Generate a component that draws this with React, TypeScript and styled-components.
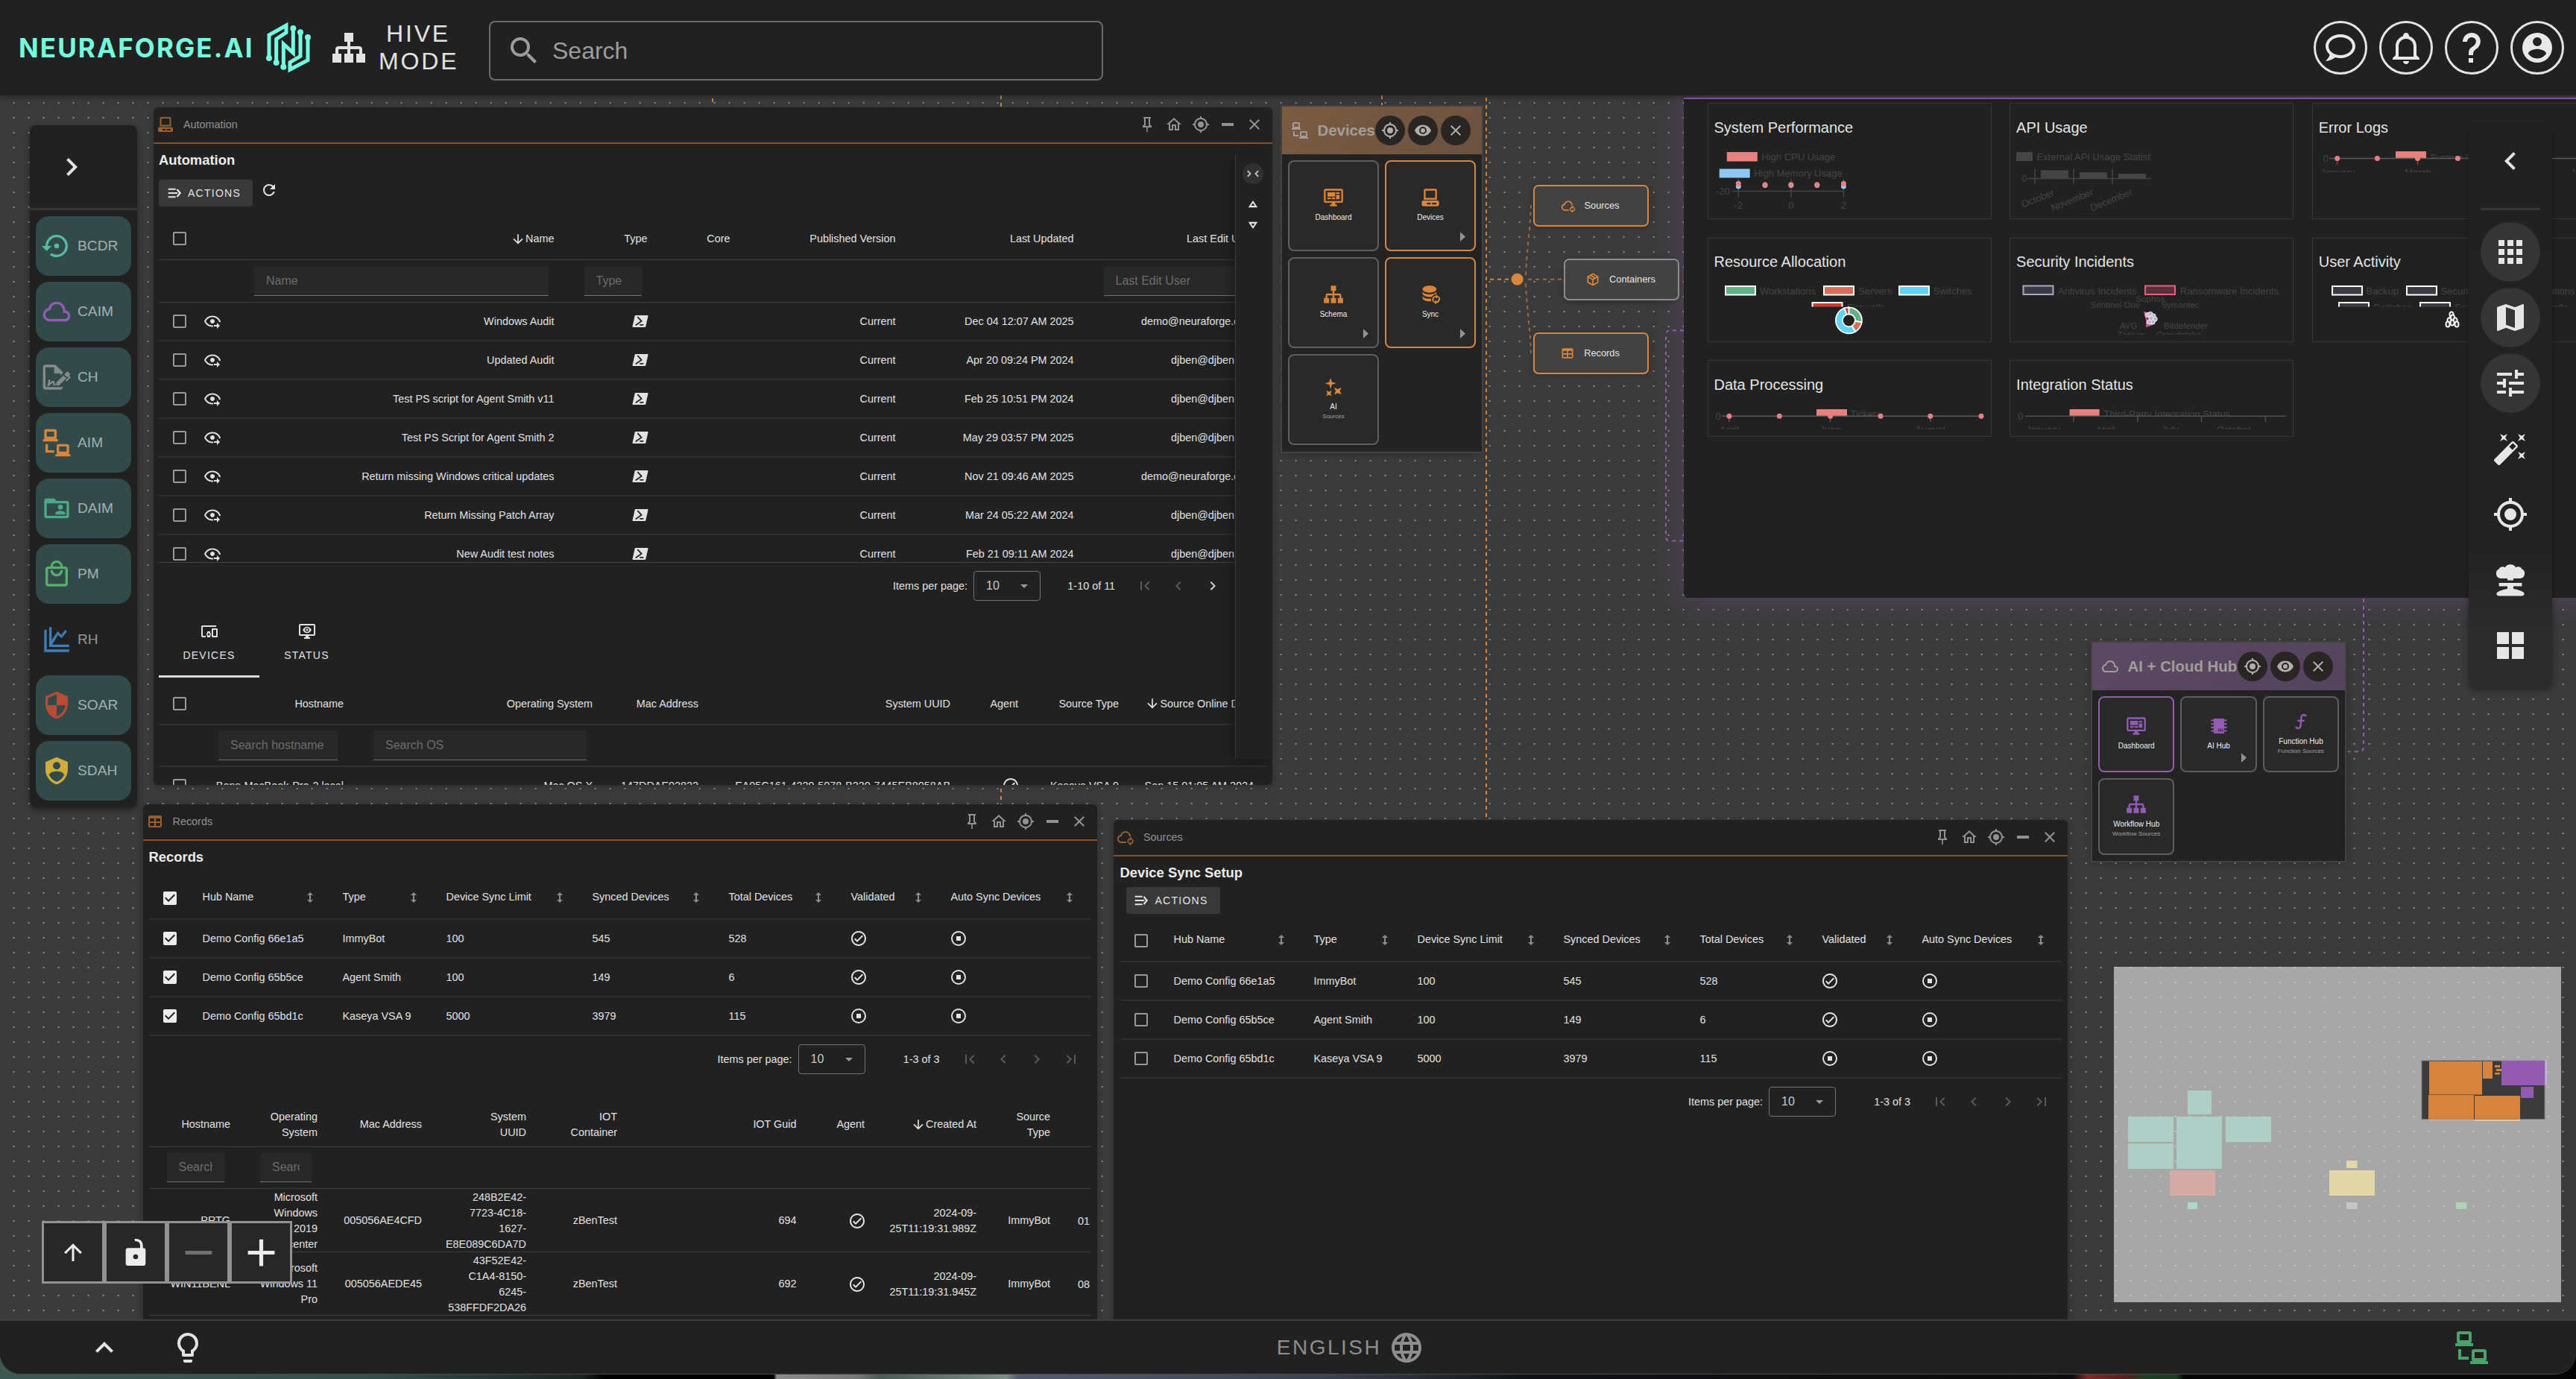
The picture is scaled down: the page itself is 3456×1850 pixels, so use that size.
import React from "react";
import styled, { createGlobalStyle, css } from "styled-components";

const ORANGE = "#d9853b";
const PURPLE = "#935bb5";
const TEXT = "#e2e2e2";

const Global = createGlobalStyle`
  * { box-sizing: border-box; }
  html, body { margin: 0; padding: 0; background: #000; }
  body { width: 3456px; height: 1850px; overflow: hidden; font-family: "Liberation Sans", Arial, Helvetica, sans-serif; color: ${TEXT}; }
`;

/* ------------------------------------------------------------------ icons */

const P: Record<string, string> = {
  sitemap: "M9,2V8H11V11H5C3.89,11 3,11.89 3,13V16H1V22H7V16H5V13H11V16H9V22H15V16H13V13H19V16H17V22H23V16H21V13C21,11.89 20.11,11 19,11H13V8H15V2H9Z",
  magnify: "M9.5,3A6.5,6.5 0 0,1 16,9.5C16,11.11 15.41,12.59 14.44,13.73L14.71,14H15.5L20.5,19L19,20.5L14,15.5V14.71L13.73,14.44C12.59,15.41 11.11,16 9.5,16A6.5,6.5 0 0,1 3,9.5A6.5,6.5 0 0,1 9.5,3M9.5,5C7,5 5,7 5,9.5C5,12 7,14 9.5,14C12,14 14,12 14,9.5C14,7 12,5 9.5,5Z",
  right: "M8.59,16.58L13.17,12L8.59,7.41L10,6L16,12L10,18L8.59,16.58Z",
  left: "M15.41,16.58L10.83,12L15.41,7.41L14,6L8,12L14,18L15.41,16.58Z",
  up: "M7.41,15.41L12,10.83L16.59,15.41L18,14L12,8L6,14L7.41,15.41Z",
  restore: "M12,3A9,9 0 0,0 3,12H0L4,16L8,12H5A7,7 0 0,1 12,5A7,7 0 0,1 19,12A7,7 0 0,1 12,19C10.5,19 9.09,18.5 7.94,17.7L6.5,19.14C8.04,20.3 9.94,21 12,21A9,9 0 0,0 21,12A9,9 0 0,0 12,3M14,12A2,2 0 0,0 12,10A2,2 0 0,0 10,12A2,2 0 0,0 12,14A2,2 0 0,0 14,12Z",
  cloud: "M6.5 20Q4.22 20 2.61 18.43 1 16.85 1 14.58 1 12.63 2.17 11.1 3.35 9.57 5.25 9.15 5.88 6.85 7.75 5.43 9.63 4 12 4 14.93 4 16.96 6.04 19 8.07 19 11 20.73 11.2 21.86 12.5 23 13.78 23 15.5 23 17.38 21.69 18.69 20.38 20 18.5 20M6.5 18H18.5Q19.55 18 20.27 17.27 21 16.55 21 15.5 21 14.45 20.27 13.73 19.55 13 18.5 13H17V11Q17 8.93 15.54 7.46 14.08 6 12 6 9.93 6 8.46 7.46 7 8.93 7 11H6.5Q5.05 11 4.03 12.03 3 13.05 3 14.5 3 15.95 4.03 17 5.05 18 6.5 18Z",
  fileSign: "M19.7 12.9L14 18.6H11.7V16.3L17.4 10.6L19.7 12.9M23.1 12.1C23.1 12.4 22.8 12.7 22.5 13L20 15.5L19.1 14.6L21.7 12L21.1 11.4L20.4 12.1L18.1 9.8L20.3 7.7C20.5 7.5 20.9 7.5 21.2 7.7L22.6 9.1C22.8 9.3 22.8 9.7 22.6 10C22.4 10.2 22.2 10.4 22.2 10.6C22.2 10.8 22.4 11 22.6 11.2C22.9 11.5 23.2 11.8 23.1 12.1M3 20V4H10V9H15V10.5L17 8.5V8L11 2H3C1.9 2 1 2.9 1 4V20C1 21.1 1.9 22 3 22H15C16.1 22 17 21.1 17 20H3M11 17.1C10.8 17.1 10.6 17.2 10.5 17.2L10 15H8.5L6.4 16.7L7 14H5.5L4.5 19H6L8.9 16.4L9.5 18.7H10.5L11 18.6V17.1Z",
  laptops: "M3.5 1H10.5A1.5 1.5 0 0 1 12 2.5V7.5A1.5 1.5 0 0 1 11.3 9H13V11H1V9H2.7A1.5 1.5 0 0 1 2 7.5V2.5A1.5 1.5 0 0 1 3.5 1M4 3V7H10V3ZM3 13H5V18H10V20H3ZM13.5 13H20.5A1.5 1.5 0 0 1 22 14.5V19.5A1.5 1.5 0 0 1 21.3 21H23V23H11V21H12.7A1.5 1.5 0 0 1 12 19.5V14.5A1.5 1.5 0 0 1 13.5 13M14 15V19H20V15Z",
  folder: "M20,6H12L10,4H4A2,2 0 0,0 2,6V18A2,2 0 0,0 4,20H20A2,2 0 0,0 22,18V8A2,2 0 0,0 20,6M20,18H4V8H20V18M15,9A2,2 0 0,1 17,11A2,2 0 0,1 15,13A2,2 0 0,1 13,11A2,2 0 0,1 15,9M19,17H11V16C11,14.67 13.67,14 15,14C16.33,14 19,14.67 19,16V17Z",
  shopping: "M19 6H17C17 3.2 14.8 1 12 1S7 3.2 7 6H5C3.9 6 3 6.9 3 8V20C3 21.1 3.9 22 5 22H19C20.1 22 21 21.1 21 20V8C21 6.9 20.1 6 19 6M12 3C13.7 3 15 4.3 15 6H9C9 4.3 10.3 3 12 3M19 20H5V8H19V20M12 12C10.3 12 9 10.7 9 9H7C7 11.8 9.2 14 12 14S17 11.8 17 9H15C15 10.7 13.7 12 12 12Z",
  chart: "M2 4H4V20H22V22H2ZM6 2H8V12.5L12.8 5.4L15.8 8.3L18.9 4.2L20.4 5.4L16 11L13.1 8.2L8.4 16H22V18H6Z",
  security: "M12,12H19C18.47,16.11 15.72,19.78 12,20.92V12H5V6.3L12,3.19M12,1L3,5V11C3,16.55 6.84,21.73 12,23C17.16,21.73 21,16.55 21,11V5L12,1Z",
  shieldAccount: "M12,1L3,5V11C3,16.55 6.84,21.74 12,23C17.16,21.74 21,16.55 21,11V5L12,1M12,5A3,3 0 0,1 15,8A3,3 0 0,1 12,11A3,3 0 0,1 9,8A3,3 0 0,1 12,5M17.13,17C15.92,18.85 14.11,20.24 12,20.92C9.89,20.24 8.08,18.85 6.87,17C6.53,16.5 6.24,16 6,15.47C6,13.82 8.71,12.47 12,12.47C15.29,12.47 18,13.79 18,15.47C17.76,16 17.47,16.5 17.13,17Z",
  pin: "M16,12V4H17V2H7V4H8V12L6,14V16H11.2V22H12.8V16H18V14L16,12M8.8,14L10,12.8V4H14V12.8L15.2,14H8.8Z",
  home: "M12 5.69L17 10.19V18H15V12H9V18H7V10.19L12 5.69M12 3L2 12H5V20H11V14H13V20H19V12H22",
  gps: "M12,8A4,4 0 0,1 16,12A4,4 0 0,1 12,16A4,4 0 0,1 8,12A4,4 0 0,1 12,8M3.05,13H1V11H3.05C3.5,6.83 6.83,3.5 11,3.05V1H13V3.05C17.17,3.5 20.5,6.83 20.95,11H23V13H20.95C20.5,17.17 17.17,20.5 13,20.95V23H11V20.95C6.83,20.5 3.5,17.17 3.05,13M12,5A7,7 0 0,0 5,12A7,7 0 0,0 12,19A7,7 0 0,0 19,12A7,7 0 0,0 12,5Z",
  minus: "M20 14H4V10H20",
  close: "M19,6.41L17.59,5L12,10.59L6.41,5L5,6.41L10.59,12L5,17.59L6.41,19L12,13.41L17.59,19L19,17.59L13.41,12L19,6.41Z",
  desktop: "M6 2H18A1.5 1.5 0 0 1 19.5 3.5V14.5H4.5V3.5A1.5 1.5 0 0 1 6 2M6.5 4V12.5H17.5V4ZM4 15.5H20A2 2 0 0 1 22 17.5V20A2 2 0 0 1 20 22H4A2 2 0 0 1 2 20V17.5A2 2 0 0 1 4 15.5M8 18V20H12.3V18ZM14 18V20H19V18Z",
  actions: "M2 4.5H14V7H2ZM2 10.7H17V13.3H2ZM2 17H14V19.5H2ZM15.2 6.8L17.2 5L23 12L17.2 19L15.2 17.2L19.4 12Z",
  refresh: "M17.65,6.35C16.2,4.9 14.21,4 12,4A8,8 0 0,0 4,12A8,8 0 0,0 12,20C15.73,20 18.84,17.45 19.73,14H17.65C16.83,16.33 14.61,18 12,18A6,6 0 0,1 6,12A6,6 0 0,1 12,6C13.66,6 15.14,6.69 16.22,7.78L13,11H20V4L17.65,6.35Z",
  arrowDown: "M11,4H13V16L18.5,10.5L19.92,11.92L12,19.84L4.08,11.92L5.5,10.5L11,16V4Z",
  arrowUp: "M13,20H11V8L5.5,13.5L4.08,12.08L12,4.16L19.92,12.08L18.5,13.5L13,8V20Z",
  box: "M19,3H5C3.89,3 3,3.89 3,5V19A2,2 0 0,0 5,21H19A2,2 0 0,0 21,19V5C21,3.89 20.1,3 19,3M19,5V19H5V5H19Z",
  boxOn: "M10,17L5,12L6.41,10.58L10,14.17L17.59,6.58L19,8M19,3H5C3.89,3 3,3.89 3,5V19A2,2 0 0,0 5,21H19A2,2 0 0,0 21,19V5C21,3.89 20.1,3 19,3Z",
  eyeArrow: "M12 4.5C7 4.5 2.73 7.61 1 12C2.73 16.39 7 19.5 12 19.5C12.36 19.5 12.72 19.5 13.08 19.45C13.03 19.13 13 18.82 13 18.5C13 18.14 13.04 17.78 13.1 17.42C12.74 17.46 12.37 17.5 12 17.5C8.24 17.5 4.83 15.36 3.18 12C4.83 8.64 8.24 6.5 12 6.5C15.76 6.5 19.17 8.64 20.82 12C20.7 12.24 20.56 12.45 20.43 12.68C21.09 12.84 21.72 13.11 22.29 13.5C22.56 13 22.8 12.5 23 12C21.27 7.61 17 4.5 12 4.5M12 9C10.34 9 9 10.34 9 12S10.34 15 12 15 15 13.66 15 12 13.66 9 12 9M18 14V17H14V19H18V22L22 18L18 14Z",
  powershell: "M21.83,4C22.32,4 22.63,4.4 22.5,4.89L19.34,19.11C19.23,19.6 18.75,20 18.26,20H2.17C1.68,20 1.37,19.6 1.5,19.11L4.66,4.89C4.77,4.4 5.25,4 5.74,4H21.83M15.83,16H11.83C11.37,16 11,16.38 11,16.84C11,17.31 11.37,17.69 11.83,17.69H15.83C16.3,17.69 16.68,17.31 16.68,16.84C16.68,16.38 16.3,16 15.83,16M5.78,16.28C5.38,16.56 5.29,17.11 5.57,17.5C5.85,17.92 6.41,18 6.81,17.73C14.16,12.56 14.21,12.5 14.26,12.47C14.44,12.31 14.53,12.09 14.54,11.87C14.55,11.67 14.5,11.5 14.38,11.31L9.46,6.03C9.13,5.67 8.57,5.65 8.21,6C7.85,6.32 7.83,6.88 8.16,7.24L12.31,11.68L5.78,16.28Z",
  devices: "M3 6h18V4H3c-1.1 0-2 .9-2 2v12c0 1.1.9 2 2 2h4v-2H3V6zm10 6H9v1.78c-.61.55-1 1.33-1 2.22s.39 1.67 1 2.22V20h4v-1.78c.61-.55 1-1.34 1-2.22s-.39-1.67-1-2.22V12zm-2 5.5c-.83 0-1.5-.67-1.5-1.5s.67-1.5 1.5-1.5 1.5.67 1.5 1.5-.67 1.5-1.5 1.5zM22 8h-6c-.5 0-1 .5-1 1v10c0 .5.5 1 1 1h6c.5 0 1-.5 1-1V9c0-.5-.5-1-1-1zm-1 10h-4v-8h4v8z",
  monitorEye: "M21,16V4H3V16H21M21,2A2,2 0 0,1 23,4V16A2,2 0 0,1 21,18H14V20H16V22H8V20H10V18H3C1.89,18 1,17.1 1,16V4C1,2.89 1.89,2 3,2H21M12 5.7C15 5.7 17 8 17.8 10C17 12 15 14.3 12 14.3C9 14.3 7 12 6.2 10C7 8 9 5.7 12 5.7M12 7.2A2.8 2.8 0 1 0 12 12.8A2.8 2.8 0 1 0 12 7.2M12 8.6A1.4 1.4 0 1 1 12 11.4A1.4 1.4 0 1 1 12 8.6",
  dashboard: "M21,16V4H3V16H21M21,2A2,2 0 0,1 23,4V16A2,2 0 0,1 21,18H14V20H16V22H8V20H10V18H3C1.89,18 1,17.1 1,16V4C1,2.89 1.89,2 3,2H21M5,6H14V11H5V6M15,6H19V8H15V6M19,9V14H15V9H19M5,12H9V14H5V12M10,12H14V14H10V12Z",
  sort: "M13,9V15H16L12,19L8,15H11V9H8L12,5L16,9H13Z",
  caret: "M7,10L12,15L17,10H7Z",
  first: "M18.41,16.59L13.82,12L18.41,7.41L17,6L11,12L17,18L18.41,16.59M6,6H8V18H6V6Z",
  last: "M5.59,7.41L10.18,12L5.59,16.59L7,18L13,12L7,6L5.59,7.41M16,6H18V18H16V6Z",
  check: "M12 2C6.5 2 2 6.5 2 12S6.5 22 12 22 22 17.5 22 12 17.5 2 12 2M12 20C7.59 20 4 16.41 4 12S7.59 4 12 4 20 7.59 20 12 16.41 20 12 20M16.59 7.58L10 14.17L7.41 11.59L6 13L10 17L18 9L16.59 7.58Z",
  stop: "M12,2A10,10 0 0,0 2,12A10,10 0 0,0 12,22A10,10 0 0,0 22,12A10,10 0 0,0 12,2M12,4C16.41,4 20,7.59 20,12C20,16.41 16.41,20 12,20C7.59,20 4,16.41 4,12C4,7.59 7.59,4 12,4M9,9V15H15V9",
  eye: "M12,9A3,3 0 0,0 9,12A3,3 0 0,0 12,15A3,3 0 0,0 15,12A3,3 0 0,0 12,9M12,17A5,5 0 0,1 7,12A5,5 0 0,1 12,7A5,5 0 0,1 17,12A5,5 0 0,1 12,17M12,4.5C7,4.5 2.73,7.61 1,12C2.73,16.39 7,19.5 12,19.5C17,19.5 21.27,16.39 23,12C21.27,7.61 17,4.5 12,4.5Z",
  table: "M5,4H19A2,2 0 0,1 21,6V18A2,2 0 0,1 19,20H5A2,2 0 0,1 3,18V6A2,2 0 0,1 5,4M5,8V12H11V8H5M13,8V12H19V8H13M5,14V18H11V14H5M13,14V18H19V14H13Z",
  cloudSync: "M6.5 20A5.5 5.5 0 0 1 1 14.5A5.5 5.5 0 0 1 5.3 9.1A7 7 0 0 1 19 11V11.6H17V11A5 5 0 0 0 7 11H6.5A3.5 3.5 0 0 0 3 14.5A3.5 3.5 0 0 0 6.5 18H13V20ZM18.5 13.2V15A3 3 0 0 0 16.5 19.5L15.4 20.6A4.5 4.5 0 0 1 18.5 13.2V11.6L21.2 14.2L18.5 16.8ZM20.6 15.5L21.7 14.4A4.5 4.5 0 0 1 18.7 21.8V23.4L16 20.8L18.7 18.2V20A3 3 0 0 0 20.6 15.5Z",
  package: "M21,16.5C21,16.88 20.79,17.21 20.47,17.38L12.57,21.82C12.41,21.94 12.21,22 12,22C11.79,22 11.59,21.94 11.43,21.82L3.53,17.38C3.21,17.21 3,16.88 3,16.5V7.5C3,7.12 3.21,6.79 3.53,6.62L11.43,2.18C11.59,2.06 11.79,2 12,2C12.21,2 12.41,2.06 12.57,2.18L20.47,6.62C20.79,6.79 21,7.12 21,7.5V16.5M12,4.15L10.11,5.22L16,8.61L17.96,7.5L12,4.15M6.04,7.5L12,10.85L13.96,9.75L8.08,6.35L6.04,7.5M5,15.91L11,19.29V12.58L5,9.21V15.91M19,15.91V9.21L13,12.58V19.29L19,15.91Z",
  dbSync: "M11 2C6.6 2 3 3.8 3 6C3 8.2 6.6 10 11 10C15.4 10 19 8.2 19 6C19 3.8 15.4 2 11 2ZM3 8.2V11C3 13.2 6.6 15 11 15C12 15 12.9 14.9 13.8 14.7C14.8 13 16.5 11.8 18.5 11.5L19 11V8.2C19 10.4 15.4 12 11 12C6.6 12 3 10.4 3 8.2ZM3 13.2V16C3 18.2 6.6 20 11 20C11.7 20 12.4 20 13 19.9C12.8 19 12.7 18 12.9 17L11 17C6.6 17 3 15.4 3 13.2ZM18.5 13.4V15A3 3 0 0 0 16.3 19.8L15.2 20.9A4.5 4.5 0 0 1 18.5 13.4V11.7L21.4 14.3L18.5 16.9ZM20.8 15.3L21.9 14.2A4.5 4.5 0 0 1 18.7 21.8V23.5L15.8 20.9L18.7 18.3V20.1A3 3 0 0 0 20.8 15.3Z",
  sparkle: "M8.7 1.4L10.2 6.5L15.4 8L10.2 9.5L8.7 14.6L7.2 9.5L2 8L7.2 6.5ZM12.8 12.8L17 14.6L21.2 12.8L19.4 16.8L21.2 20.8L17 19L12.8 20.8L14.6 16.8ZM3.6 16.2L6.8 17.5L10.1 16.2L8.7 19.4L10.1 22.6L6.8 21.2L3.6 22.6L5 19.4Z",
  chip: "M6 3.5H18V4.7H21V6.5H18V8.7H21V10.5H18V12.7H21V14.5H18V16.7H21V18.5H18V20.5H6V18.5H3V16.7H6V14.5H3V12.7H6V10.5H3V8.7H6V6.5H3V4.7H6ZM11.3 15V18.5H12.4V15ZM13.5 15V18.5H14.6V15ZM15.7 15V18.5H16.7V15Z",
  fn: "M15.6,5.29C14.5,5.19 13.53,6 13.43,7.11L13.18,10H16V12H13L12.56,17.07C12.37,19.27 10.43,20.9 8.23,20.7C6.92,20.59 5.82,19.86 5.17,18.83L6.67,17.33C6.91,18.07 7.57,18.64 8.4,18.71C9.5,18.81 10.47,18 10.57,16.89L11,12H8V10H11.17L11.44,6.93C11.63,4.73 13.57,3.1 15.77,3.3C17.08,3.41 18.18,4.14 18.83,5.17L17.33,6.67C17.09,5.93 16.43,5.36 15.6,5.29Z",
  apps: "M16,20H20V16H16M16,14H20V10H16M10,8H14V4H10M16,8H20V4H16M10,14H14V10H10M4,14H8V10H4M4,20H8V16H4M10,20H14V16H10M4,8H8V4H4V8Z",
  map: "M15,19L9,16.89V5L15,7.11M20.5,3C20.44,3 20.39,3 20.34,3L15,5.1L9,3L3.36,4.9C3.15,4.97 3,5.15 3,5.38V20.5A0.5,0.5 0 0,0 3.5,21C3.55,21 3.61,21 3.66,20.97L9,18.9L15,21L20.64,19.1C20.85,19 21,18.85 21,18.62V3.5A0.5,0.5 0 0,0 20.5,3Z",
  tune: "M3,17V19H9V17H3M3,5V7H13V5H3M13,21V19H21V17H13V15H11V21H13M7,9V11H3V13H7V15H9V9H7M21,13V11H11V13H21M15,9H17V7H21V5H17V3H15V9Z",
  wand: "M7.5,5.6L5,7L6.4,4.5L5,2L7.5,3.4L10,2L8.6,4.5L10,7L7.5,5.6M19.5,15.4L22,14L20.6,16.5L22,19L19.5,17.6L17,19L18.4,16.5L17,14L19.5,15.4M22,2L20.6,4.5L22,7L19.5,5.6L17,7L18.4,4.5L17,2L19.5,3.4L22,2M13.34,12.78L15.78,10.34L13.66,8.22L11.22,10.66L13.34,12.78M14.37,7.29L16.71,9.63C17.1,10 17.1,10.65 16.71,11.04L5.04,22.71C4.65,23.1 4,23.1 3.63,22.71L1.29,20.37C0.9,20 0.9,19.35 1.29,18.96L12.96,7.29C13.35,6.9 14,6.9 14.37,7.29Z",
  nuke: "M14 12.2H10V11H5.5A3.3 3.3 0 0 1 4.2 4.8A3 3 0 0 1 8.4 3.6A4 3.4 0 0 1 15.6 3.6A3 3 0 0 1 19.8 4.8A3.3 3.3 0 0 1 18.5 11H14ZM4.3 14H19.7V16.2H14V18C17 18.5 19.6 19.2 21 20.5C21.8 21.8 20.8 22.8 19.5 22.8H4.5C3.2 22.8 2.2 21.8 3 20.5C4.4 19.2 7 18.5 10 18V16.2H4.3Z",
  grid4: "M3,11H11V3H3M3,21H11V13H3M13,21H21V13H13M13,3V11H21V3",
  chat: "M12,3C6.5,3 2,6.58 2,11C2.05,13.15 3.06,15.17 4.75,16.5C4.75,17.1 4.33,18.67 2,21C4.37,20.89 6.64,20 8.47,18.5C9.61,18.83 10.81,19 12,19C17.5,19 22,15.42 22,11C22,6.58 17.5,3 12,3M12,17C7.58,17 4,14.31 4,11C4,7.69 7.58,5 12,5C16.42,5 20,7.69 20,11C20,14.31 16.42,17 12,17Z",
  bell: "M10 21H14C14 22.1 13.1 23 12 23S10 22.1 10 21M21 19V20H3V19L5 17V11C5 7.9 7 5.2 10 4.3V4C10 2.9 10.9 2 12 2S14 2.9 14 4V4.3C17 5.2 19 7.9 19 11V17L21 19M17 11C17 8.2 14.8 6 12 6S7 8.2 7 11V18H17V11Z",
  help: "M10,19H13V22H10V19M12,2C17.35,2.22 19.68,7.62 16.5,11.67C15.67,12.67 14.33,13.33 13.67,14.17C13,15 13,16 13,17H10C10,15.33 10,13.92 10.67,12.92C11.33,11.92 12.67,11.33 13.5,10.67C15.92,8.43 15.32,5.26 12,5A3,3 0 0,0 9,8H6A6,6 0 0,1 12,2Z",
  account: "M12,19.2C9.5,19.2 7.29,17.92 6,16C6.03,14 10,12.9 12,12.9C14,12.9 17.97,14 18,16C16.71,17.92 14.5,19.2 12,19.2M12,5A3,3 0 0,1 15,8A3,3 0 0,1 12,11A3,3 0 0,1 9,8A3,3 0 0,1 12,5M12,2A10,10 0 0,0 2,12A10,10 0 0,0 12,22A10,10 0 0,0 22,12C22,6.47 17.5,2 12,2Z",
  bulb: "M12,2A7,7 0 0,1 19,9C19,11.38 17.81,13.47 16,14.74V17A1,1 0 0,1 15,18H9A1,1 0 0,1 8,17V14.74C6.19,13.47 5,11.38 5,9A7,7 0 0,1 12,2M9,21V20H15V21A1,1 0 0,1 14,22H10A1,1 0 0,1 9,21M12,4A5,5 0 0,0 7,9C7,11.05 8.23,12.81 10,13.58V16H14V13.58C15.77,12.81 17,11.05 17,9A5,5 0 0,0 12,4Z",
  web: "M16.36,14C16.44,13.34 16.5,12.68 16.5,12C16.5,11.32 16.44,10.66 16.36,10H19.74C19.9,10.64 20,11.31 20,12C20,12.69 19.9,13.36 19.74,14M14.59,19.56C15.19,18.45 15.65,17.25 15.97,16H18.92C17.96,17.65 16.43,18.93 14.59,19.56M14.34,14H9.66C9.56,13.34 9.5,12.68 9.5,12C9.5,11.32 9.56,10.65 9.66,10H14.34C14.43,10.65 14.5,11.32 14.5,12C14.5,12.68 14.43,13.34 14.34,14M12,19.96C11.17,18.76 10.5,17.43 10.09,16H13.91C13.5,17.43 12.83,18.76 12,19.96M8,8H5.08C6.03,6.34 7.57,5.06 9.4,4.44C8.8,5.55 8.35,6.75 8,8M5.08,16H8C8.35,17.25 8.8,18.45 9.4,19.56C7.57,18.93 6.03,17.65 5.08,16M4.26,14C4.1,13.36 4,12.69 4,12C4,11.31 4.1,10.64 4.26,10H7.64C7.56,10.66 7.5,11.32 7.5,12C7.5,12.68 7.56,13.34 7.64,14M12,4.03C12.83,5.23 13.5,6.57 13.91,8H10.09C10.5,6.57 11.17,5.23 12,4.03M18.92,8H15.97C15.65,6.75 15.19,5.55 14.59,4.44C16.43,5.07 17.96,6.34 18.92,8M12,2C6.47,2 2,6.5 2,12A10,10 0 0,0 12,22A10,10 0 0,0 22,12A10,10 0 0,0 12,2Z",
  lockOpen: "M6 8.6H15.6V6.6C15.6 4.2 14 2.9 11.6 3.2L11 1.4C14.8 .6 17.8 3 17.8 6.6V8.6H18A2 2 0 0 1 20 10.6V20.8A2 2 0 0 1 18 22.8H6A2 2 0 0 1 4 20.8V10.6A2 2 0 0 1 6 8.6M12 13.6A2 2 0 1 0 12 17.6A2 2 0 1 0 12 13.6Z",
  dash: "M1 10.5H23V13.5H1Z",
  plus: "M10.4 1H13.6V10.4H23V13.6H13.6V23H10.4V13.6H1V10.4H10.4Z",
  triUp: "M12 6L19.5 17H4.5ZM12 10.3L9.2 14.5H14.8Z",
  triDown: "M4.5 7H19.5L12 18ZM9.2 9.5L12 13.7L14.8 9.5Z",
  collapse: "M1.5 7.6L3.4 6L9 12L3.4 18L1.5 16.4L5.6 12ZM22.5 7.6L20.6 6L15 12L20.6 18L22.5 16.4L18.4 12Z",
  play: "M7 3L17 12L7 21Z",
};
const EVEN = new Set(["laptops", "desktop", "chip", "lockOpen", "triUp", "triDown", "monitorEye"]);

const Svg = styled.svg`
  display: block;
  flex: none;
`;
const Ico = ({ n, s = 24, c = "currentColor" }: { n: string; s?: number; c?: string }) => (
  <Svg width={s} height={s} viewBox="0 0 24 24">
    <path d={P[n]} fill={c} fillRule={EVEN.has(n) ? "evenodd" : "nonzero"} />
  </Svg>
);

/* ----------------------------------------------------------------- layout */

const Desktop = styled.div`
  width: 3456px;
  height: 1850px;
  overflow: hidden;
  background: linear-gradient(90deg, #3c5a52 0, #35504a 500px, #1c2422 780px, #000 812px, #000 1038px, #8b8b8b 1042px, #777 1150px, #4c5a56 1180px, #7d8c88 1350px, #555b6e 1365px, #3c3f4c 1800px, #101113 2050px, #0c0c0c 2780px, #7e2b28 2800px, #5a1f1d 2850px, #1d4024 2880px, #1d3a22 2920px, #050505 2930px);
`;
const Frame = styled.div`
  width: 3456px;
  height: 1844px;
  display: flex;
  flex-direction: column;
  overflow: hidden;
  border-radius: 0 0 28px 28px;
  border-bottom: 1px solid #4a4a4a;
  background: #212121;
`;
const Header = styled.header`
  position: relative;
  z-index: 5;
  flex: none;
  height: 128px;
  background: #212121;
  display: flex;
  align-items: center;
  padding: 0 16px 0 25px;
  box-shadow: 0 2px 8px rgba(0, 0, 0, 0.35);
`;
const Brand = styled.div`
  width: 330px;
  font-family: Inter, sans-serif;
  font-weight: 700;
  font-size: 35px;
  letter-spacing: 2.1px;
  color: #75fbde;
  white-space: nowrap;
`;
const LogoSvg = styled(Svg)`
  margin-left: 1px;
`;
const Mode = styled.div`
  margin-left: 16px;
  width: 106px;
  font-size: 32px;
  line-height: 37px;
  letter-spacing: 2.86px;
  text-align: center;
`;
const HiveIcon = styled.div`
  margin-left: 26px;
`;
const SearchBox = styled.div`
  margin: 8px 0 0 42px;
  width: 824px;
  height: 80px;
  border: 2px solid #6b6b6b;
  border-radius: 8px;
  display: flex;
  align-items: center;
  gap: 14px;
  padding-left: 21px;
  font-size: 32px;
  color: #9c9c9c;
`;
const HeaderActions = styled.div`
  margin-left: auto;
  display: flex;
  gap: 16px;
`;
const RoundAction = styled.div`
  width: 72px;
  height: 72px;
  border: 3px solid #e4e4e4;
  border-radius: 50%;
  display: grid;
  place-items: center;
  color: #e8e8e8;
`;

const Canvas = styled.main`
  position: relative;
  flex: 1;
  overflow: hidden;
  background-color: #3b3b3b;
  background-image: radial-gradient(circle, #8a8a8a 0, #8a8a8a 0.9px, transparent 1.5px);
  background-size: 20px 20px;
  background-position: 8.6px 0px;
`;
const EdgesSvg = styled.svg`
  position: absolute;
  left: 0;
  top: 0;
`;

/* Free-floating item, placed by its page coordinates under the 128px header. */
const Placed = styled.div<{ $x: number; $y: number; $w: number; $h: number }>`
  position: absolute;
  left: ${(p) => p.$x}px;
  top: ${(p) => p.$y - 128}px;
  width: ${(p) => p.$w}px;
  height: ${(p) => p.$h}px;
`;

const WindowBox = styled(Placed)`
  background: #212121;
  border-radius: 6px;
  overflow: hidden;
  display: flex;
  flex-direction: column;
  box-shadow: 0 2px 10px rgba(0, 0, 0, 0.25);
`;
const WindowBar = styled.div`
  flex: none;
  height: 49px;
  border-bottom: 2px solid #86522a;
  display: flex;
  align-items: center;
  padding: 0 12px 1px 4px;
  color: #929292;
  font-size: 14.4px;
`;
const BarIcon = styled.div`
  width: 36px;
  color: #97602f;
`;
const BarButtons = styled.div`
  margin-left: auto;
  display: flex;
  gap: 12px;
`;
const WindowBody = styled.div<{ $l?: number }>`
  flex: 1;
  min-height: 0;
  padding: 7.5px 8px 0 ${(p) => p.$l ?? 8}px;
  display: flex;
  flex-direction: column;
`;
const Title = styled.div`
  flex: none;
  height: 29px;
  line-height: 27px;
  font-size: 18.4px;
  font-weight: 700;
  color: #ececec;
`;
const ActionRow = styled.div<{ $mt: number; $ml?: number }>`
  flex: none;
  margin: ${(p) => p.$mt}px 0 0 ${(p) => p.$ml ?? 0}px;
  height: 36px;
  display: flex;
  gap: 10px;
`;
const ActionButton = styled.div`
  width: 126px;
  height: 36px;
  border-radius: 4px;
  background: #393939;
  display: flex;
  align-items: center;
  gap: 8.5px;
  padding-left: 10.5px;
  font-size: 14px;
  letter-spacing: 1.25px;
`;
const RefreshSlot = styled.div`
  padding-top: 2px;
`;

/* ----------------------------------------------------------------- tables */

const TableBox = styled.div<{ $mt: number; $h?: number }>`
  flex: none;
  margin-top: ${(p) => p.$mt}px;
  ${(p) => p.$h && css`height: ${p.$h}px; border-bottom: 1px solid #424242;`}
  overflow: hidden;
  font-size: 14.4px;
`;
const Row = styled.div<{ $cols: string; $h: number; $line?: string }>`
  display: grid;
  grid-template-columns: ${(p) => p.$cols};
  height: ${(p) => p.$h}px;
  align-items: center;
  border-bottom: ${(p) => p.$line ?? "2px solid #2e2e2e"};
`;
const Cell = styled.div<{ $align?: string; $wrap?: boolean }>`
  display: flex;
  align-items: center;
  justify-content: ${(p) => (p.$align === "left" ? "flex-start" : p.$align === "center" ? "center" : "flex-end")};
  text-align: ${(p) => p.$align ?? "right"};
  padding: 1px ${(p) => (p.$align === "center" ? 0 : 16)}px 0;
  line-height: 21px;
  white-space: ${(p) => (p.$wrap ? "pre-line" : "nowrap")};
  color: ${TEXT};
  min-width: 0;
`;
const BoxCell = styled(Cell)`
  padding-top: 0;
  color: #9a9a9a;
`;
const EyeCell = styled.div`
  padding-left: 4px;
`;
const SortSlot = styled.div`
  margin-left: auto;
  color: #8c8c8c;
`;
const IconNudge = styled.div`
  margin: 0 -2px;
`;
const Field = styled.div`
  margin: 0 24px;
  height: 40px;
  min-width: 0;
  padding: 0 16px;
  background: #282828;
  border-bottom: 1.5px solid #717171;
  border-radius: 4px 4px 0 0;
`;
const FieldText = styled.div`
  overflow: hidden;
  white-space: nowrap;
  font-size: 16px;
  line-height: 40px;
  color: #6c6c6c;
`;
const SearchField = ({ t }: { t?: string }) => (t ? <Field><FieldText>{t}</FieldText></Field> : <span />);

const PagerRow = styled.div`
  flex: none;
  height: 63px;
  display: flex;
  align-items: center;
  justify-content: flex-end;
  padding-right: 15px;
  font-size: 14.4px;
`;
const PageSize = styled.div`
  margin-left: 8px;
  width: 90px;
  height: 40px;
  border: 1px solid #727272;
  border-radius: 4px;
  display: flex;
  align-items: center;
  justify-content: space-between;
  padding: 0 9px 0 16px;
  font-size: 16px;
  color: #c8c8c8;
`;
const PageRange = styled.div`
  width: 100px;
  text-align: right;
`;
const PageNav = styled.div`
  margin-left: 28px;
  display: flex;
  gap: 21.3px;
  color: #5a5a5a;
`;
const Pager = ({ range, next }: { range: string; next?: boolean }) => (
  <PagerRow>
    Items per page:
    <PageSize>10<Ico n="caret" c="#9a9a9a" /></PageSize>
    <PageRange>{range}</PageRange>
    <PageNav>
      <Ico n="first" />
      <Ico n="left" />
      <Ico n="right" c={next ? "#cfcfcf" : undefined} />
      <Ico n="last" />
    </PageNav>
  </PagerRow>
);

const Window = ({ x, y, w, h, icon, name, children }: any) => (
  <WindowBox $x={x} $y={y} $w={w} $h={h}>
    <WindowBar>
      <BarIcon><Ico n={icon} /></BarIcon>
      {name}
      <BarButtons>
        {["pin", "home", "gps", "minus", "close"].map((n) => <Ico key={n} n={n} />)}
      </BarButtons>
    </WindowBar>
    {children}
  </WindowBox>
);

const AUTO_COLS = "56px 48px 442.5px 125px 111px 222px 239px 242px";
const AUTO_ROWS = [
  ["Windows Audit", "Dec 04 12:07 AM 2025", "demo@neuraforge.com"],
  ["Updated Audit", "Apr 20 09:24 PM 2024", "djben@djben.net"],
  ["Test PS script for Agent Smith v11", "Feb 25 10:51 PM 2024", "djben@djben.net"],
  ["Test PS Script for Agent Smith 2", "May 29 03:57 PM 2025", "djben@djben.net"],
  ["Return missing Windows critical updates", "Nov 21 09:46 AM 2025", "demo@neuraforge.com"],
  ["Return Missing Patch Array", "Mar 24 05:22 AM 2024", "djben@djben.net"],
  ["New Audit test notes", "Feb 21 09:11 AM 2024", "djben@djben.net"],
];
const UserCell = styled(Cell)<{ $wide: boolean }>`
  padding-right: ${(p) => (p.$wide ? 16 : 18.5)}px;
`;
const DEV_COLS = "56px 208px 334px 142px 338px 91px 135px 181px";

const Tabs = styled.div`
  flex: none;
  height: 91px;
  display: flex;
`;
const Tab = styled.div<{ $w: number; $on?: boolean }>`
  width: ${(p) => p.$w}px;
  display: flex;
  flex-direction: column;
  align-items: center;
  padding-top: 17px;
  gap: 11px;
  font-size: 14px;
  line-height: 18px;
  letter-spacing: 1.25px;
  border-bottom: 3px solid ${(p) => (p.$on ? "#dcdcdc" : "transparent")};
`;
const Drawer = styled.div`
  position: absolute;
  right: 0;
  top: 63px;
  width: 50px;
  height: 811px;
  background: #212121;
  border-left: 1px solid #3c3c3c;
  box-shadow: -4px 4px 16px rgba(0, 0, 0, 0.3);
  display: flex;
  flex-direction: column;
  align-items: center;
  padding: 12px 3px 0 0;
`;
const DrawerRound = styled.div`
  width: 28px;
  height: 28px;
  border-radius: 50%;
  background: #313131;
  color: #c4c4c4;
  display: grid;
  place-items: center;
  margin-bottom: 13px;
`;
const DrawerStep = styled.div`
  height: 28px;
  display: grid;
  place-items: center;
`;

const AutomationWindow = () => (
  <Window x={206} y={144} w={1501} h={909} icon="desktop" name="Automation">
    <WindowBody $l={7}>
      <Title>Automation</Title>
      <ActionRow $mt={11}>
        <ActionButton><Ico n="actions" s={20} />ACTIONS</ActionButton>
        <RefreshSlot><Ico n="refresh" /></RefreshSlot>
      </ActionRow>
      <TableBox $mt={16} $h={462}>
        <Row $cols={AUTO_COLS} $h={56} $line="1px solid #3d3d3d">
          <BoxCell $align="center"><Ico n="box" /></BoxCell><span />
          <Cell><Ico n="arrowDown" s={20} />Name</Cell>
          <Cell>Type</Cell><Cell>Core</Cell><Cell>Published Version</Cell><Cell>Last Updated</Cell><Cell>Last Edit User</Cell>
        </Row>
        <Row $cols={AUTO_COLS} $h={57} $line="1px solid #3d3d3d">
          <span /><span />
          <SearchField t="Name" /><SearchField t="Type" /><span /><span /><span /><SearchField t="Last Edit User" />
        </Row>
        {AUTO_ROWS.map(([name, date, user]) => (
          <Row key={name} $cols={AUTO_COLS} $h={52}>
            <BoxCell $align="center"><Ico n="box" /></BoxCell>
            <EyeCell><Ico n="eyeArrow" /></EyeCell>
            <Cell>{name}</Cell>
            <Cell><IconNudge><Ico n="powershell" /></IconNudge></Cell>
            <Cell /><Cell>Current</Cell><Cell>{date}</Cell><UserCell $wide={user[1] === "e"}>{user}</UserCell>
          </Row>
        ))}
      </TableBox>
      <Pager range="1-10 of 11" next />
      <Tabs>
        <Tab $w={135} $on><Ico n="devices" />DEVICES</Tab>
        <Tab $w={127}><Ico n="monitorEye" />STATUS</Tab>
      </Tabs>
      <TableBox $mt={8}>
        <Row $cols={DEV_COLS} $h={56}>
          <BoxCell $align="center"><Ico n="box" /></BoxCell>
          <Cell>Hostname</Cell><Cell>Operating System</Cell><Cell>Mac Address</Cell><Cell>System UUID</Cell><Cell>Agent</Cell><Cell>Source Type</Cell>
          <Cell><Ico n="arrowDown" s={20} />Source Online Date</Cell>
        </Row>
        <Row $cols={DEV_COLS} $h={56}>
          <span /><SearchField t="Search hostname" /><SearchField t="Search OS" />
        </Row>
        <Row $cols={DEV_COLS} $h={52}>
          <BoxCell $align="center"><Ico n="box" /></BoxCell>
          <Cell>Bens-MacBook-Pro-2.local</Cell><Cell>Mac OS X</Cell><Cell>147DDAE02822</Cell>
          <Cell>EA05C161-4229-5078-B230-7445EB8058AB</Cell>
          <Cell><IconNudge><Ico n="check" /></IconNudge></Cell>
          <Cell>Kaseya VSA 9</Cell><Cell>Sep 15 01:05 AM 2024</Cell>
        </Row>
      </TableBox>
    </WindowBody>
    <Drawer>
      <DrawerRound><Ico n="collapse" s={18} /></DrawerRound>
      <DrawerStep><Ico n="triUp" s={20} /></DrawerStep>
      <DrawerStep><Ico n="triDown" s={20} /></DrawerStep>
    </Drawer>
  </Window>
);

const SYNC_COLS = "56px 188px 139px 196px 183px 164px 134px 203px";
const SYNC_HEAD = ["Hub Name", "Type", "Device Sync Limit", "Synced Devices", "Total Devices", "Validated", "Auto Sync Devices"];
const SYNC_ROWS = [
  ["Demo Config 66e1a5", "ImmyBot", "100", "545", "528", "check", "stop"],
  ["Demo Config 65b5ce", "Agent Smith", "100", "149", "6", "check", "stop"],
  ["Demo Config 65bd1c", "Kaseya VSA 9", "5000", "3979", "115", "stop", "stop"],
];
const HeadCell = styled(Cell)`
  padding-top: 0;
  padding-bottom: 2px;
`;
const SyncTable = ({ on, mt }: { on?: boolean; mt: number }) => (
  <>
    <TableBox $mt={mt}>
      <Row $cols={SYNC_COLS} $h={56}>
        <BoxCell $align="center"><Ico n={on ? "boxOn" : "box"} c={on ? "#ececec" : undefined} /></BoxCell>
        {SYNC_HEAD.map((t) => <HeadCell key={t} $align="left">{t}<SortSlot><Ico n="sort" /></SortSlot></HeadCell>)}
      </Row>
      {SYNC_ROWS.map((r) => (
        <Row key={r[0]} $cols={SYNC_COLS} $h={52}>
          <BoxCell $align="center"><Ico n={on ? "boxOn" : "box"} c={on ? "#ececec" : undefined} /></BoxCell>
          {r.map((t, i) => <Cell key={i} $align="left">{i > 4 ? <IconNudge><Ico n={t} /></IconNudge> : t}</Cell>)}
        </Row>
      ))}
    </TableBox>
    <Pager range="1-3 of 3" />
  </>
);

const REC_COLS = "125.5px 117px 140px 140px 122px 240.5px 91.5px 150px 99px 60px";
const REC_ROWS = [
  ["PRTG", "Microsoft\nWindows\nServer 2019\nDatacenter", "005056AE4CFD", "248B2E42-\n7723-4C18-\n1627-\nE8E089C6DA7D", "zBenTest", "694", "check", "2024-09-\n25T11:19:31.989Z", "ImmyBot", "01"],
  ["WIN11BENL", "Microsoft\nWindows 11\nPro", "005056AEDE45", "43F52E42-\nC1A4-8150-\n6245-\n538FFDF2DA26", "zBenTest", "692", "check", "2024-09-\n25T11:19:31.945Z", "ImmyBot", "08"],
];
const LastCell = styled.div`
  padding: 1px 0 0 21px;
`;
const RecordsWindow = () => (
  <Window x={191.5} y={1079} w={1280} h={720} icon="table" name="Records">
    <WindowBody>
      <Title>Records</Title>
      <SyncTable on mt={13} />
      <TableBox $mt={26}>
        <Row $cols={REC_COLS} $h={60} $line="1px solid #3d3d3d">
          {["Hostname", "Operating\nSystem", "Mac Address", "System\nUUID", "IOT\nContainer", "IOT Guid", "Agent"].map((t) => <Cell key={t} $wrap>{t}</Cell>)}
          <Cell><Ico n="arrowDown" s={20} />Created At</Cell>
          <Cell $wrap>{"Source\nType"}</Cell>
        </Row>
        <Row $cols={REC_COLS} $h={56} $line="1px solid #3d3d3d">
          <SearchField t="Search" /><SearchField t="Search" />
        </Row>
        {REC_ROWS.map((r) => (
          <Row key={r[0]} $cols={REC_COLS} $h={85} $line="1px solid #3d3d3d">
            {r.map((t, i) =>
              i === 9 ? <LastCell key={i}>{t}</LastCell> : (
                <Cell key={i} $wrap>{i === 6 ? <IconNudge><Ico n={t} /></IconNudge> : t}</Cell>
              ))}
          </Row>
        ))}
      </TableBox>
    </WindowBody>
  </Window>
);

const SourcesWindow = () => (
  <Window x={1494} y={1100} w={1280} h={700} icon="cloudSync" name="Sources">
    <WindowBody $l={8.5}>
      <Title>Device Sync Setup</Title>
      <ActionRow $mt={4} $ml={8}><ActionButton><Ico n="actions" s={20} />ACTIONS</ActionButton></ActionRow>
      <SyncTable mt={9} />
    </WindowBody>
  </Window>
);

/* -------------------------------------------------------------------- hubs */

const HubBox = styled(Placed)`
  background: #232323;
  outline: 2px solid #424242;
  box-shadow: 0 2px 12px rgba(0, 0, 0, 0.3);
  display: flex;
  flex-direction: column;
`;
const HubHead = styled.div<{ $bg: string }>`
  flex: none;
  height: 64px;
  background: ${(p) => p.$bg};
  display: flex;
  align-items: center;
  padding-left: 12px;
  color: #a29d99;
  font-size: 20.4px;
  font-weight: 700;
  white-space: nowrap;
`;
const HubName = styled.div<{ $w: number }>`
  margin-left: 11.5px;
  width: ${(p) => p.$w}px;
`;
const HubRound = styled.div`
  width: 40px;
  height: 40px;
  margin-right: 4px;
  border-radius: 50%;
  background: #282524;
  color: #b3aeaa;
  display: grid;
  place-items: center;
  flex: none;
`;
const HubGrid = styled.div<{ $n: number; $s: number }>`
  display: grid;
  grid-template-columns: repeat(${(p) => p.$n}, ${(p) => p.$s}px);
  grid-auto-rows: ${(p) => p.$s}px;
  gap: 8px;
  padding: 8px;
`;
const Tile = styled.div<{ $c: string }>`
  position: relative;
  border: 2px solid ${(p) => p.$c};
  border-radius: 8px;
  background: #292929;
  display: flex;
  flex-direction: column;
  align-items: center;
  justify-content: center;
  padding-bottom: 3px;
`;
const TileName = styled.div`
  margin-top: 6px;
  font-size: 10px;
  line-height: 14px;
  color: #eeeeee;
`;
const TileSub = styled.div`
  font-size: 8px;
  line-height: 11px;
  color: #a2a2a2;
`;
const TileMore = styled.div`
  position: absolute;
  right: 7px;
  bottom: 9px;
`;
const HubTile = ({ icon, name, sub, more, on, c }: any) => (
  <Tile $c={on ? c : "#5e5e5e"}>
    <Ico n={icon} s={28} c={c} />
    <TileName>{name}</TileName>
    {sub && <TileSub>{sub}</TileSub>}
    {more && <TileMore><Ico n="play" s={17} c="#929292" /></TileMore>}
  </Tile>
);
const HubButtons = () => (
  <>{["gps", "eye", "close"].map((n) => <HubRound key={n}><Ico n={n} /></HubRound>)}</>
);

const NodeBox = styled(Placed)<{ $c: string }>`
  border: 2px solid ${(p) => p.$c};
  border-radius: 7px;
  background: #424242;
  display: flex;
  align-items: center;
  justify-content: center;
  gap: 12px;
  padding-right: 3px;
  font-size: 12.8px;
  color: #e6e6e6;
  box-shadow: 0 2px 8px rgba(0, 0, 0, 0.2);
`;

/* --------------------------------------------------------------- dashboard */

const DashBox = styled(Placed)`
  background: #212121;
  border-radius: 0 0 0 6px;
  border-top: 2px solid #9159b5;
  box-shadow: 0 0 44px rgba(147, 91, 181, 0.32);
  padding: 5px 0 0 32px;
  display: grid;
  grid-template-columns: repeat(3, 381px);
  grid-template-rows: 156px 140px 103px;
  gap: 24.6px;
  align-content: start;
`;
const Card = styled.div`
  border: 1.5px solid #373737;
  padding: 19.5px 0 0 8px;
  overflow: hidden;
`;
const CardTitle = styled.div`
  font-size: 20px;
  line-height: 24px;
  height: 37px;
  color: #e4e4e4;
  white-space: nowrap;
`;
const ChartSvg = styled.svg`
  display: block;
  overflow: hidden;
`;
const G = "#454545";
const T = ({ x, y, t, a = "start", s = 13 }: any) => (
  <text x={x} y={y} fill={G} fontSize={s} textAnchor={a} dominantBaseline="central">{t}</text>
);
const Chart = ({ title, h, children }: any) => (
  <Card>
    <CardTitle>{title}</CardTitle>
    <ChartSvg width={372} height={h} viewBox={`0 0 372 ${h}`}>{children}</ChartSvg>
  </Card>
);
const RED = "#e88080";
const Swatch = ({ x, y, f, s = "#fff" }: any) => <rect x={x + 1} y={y + 1} width={40} height={11.5} fill={f} stroke={s} strokeWidth={2} />;

const DONUT: [number, number, string][] = [
  [0, 98, "#5fb486"],
  [98, 150, "#d4705a"],
  [150, 340, "#5fd3f9"],
  [340, 360, "#cf3a2f"],
];
const pt = (r: number, a: number) => `${180.4 + r * Math.sin((a * Math.PI) / 180)} ${53.8 - r * Math.cos((a * Math.PI) / 180)}`;

const Dashboard = () => (
  <DashBox $x={2258.5} $y={131} $w={1230} $h={671}>
    <Chart title="System Performance" h={90}>
      <rect x={16.8} y={8} width={41} height={12.5} fill={RED} /><T x={63.3} y={14} t="High CPU Usage" />
      <rect x={6.7} y={30.5} width={41} height={12} fill="#8cc8f3" /><T x={53.2} y={36.5} t="High Memory Usage" />
      <path d="M24.5 60.5H173.4M32.3 43.5V69M102.9 43.5V69M173.4 43.5V69" stroke={G} strokeWidth={1.5} />
      <T x={2} y={60.5} t="-20" /><T x={32.3} y={79} t="-2" a="middle" /><T x={102.9} y={79} t="0" a="middle" /><T x={173.4} y={79} t="2" a="middle" />
      {[32.3, 68, 102.9, 137.8, 173.4].map((x, i) => (
        <g key={x}>
          <circle cx={x} cy={i % 4 ? 52.4 : 54} r={3.5} fill="#8cc8f3" />
          <circle cx={x} cy={i % 4 ? 51.7 : 50.3} r={3.5} fill={RED} />
        </g>
      ))}
    </Chart>
    <Chart title="API Usage" h={90}>
      <rect x={0} y={8} width={22} height={12} fill={G} />
      <svg x={0} y={0} width={180.5} height={30}><T x={27.4} y={14} t="External API Usage Statistics" /></svg>
      <path d="M15.8 43.4H180M25 30V51M77 30V51M129 30V51" stroke={G} strokeWidth={1.5} />
      <T x={11} y={43.4} t="0" a="middle" />
      <rect x={33} y={32.4} width={37} height={11} fill={G} /><rect x={85} y={35.2} width={37} height={8} fill={G} /><rect x={137} y={37} width={37} height={6} fill={G} />
      {[[29, 70, "October"], [75, 72, "November"], [127.5, 72, "December"]].map(([x, y, t]: any) => (
        <g key={t} transform={`translate(${x} ${y}) rotate(-22)`}><T x={0} y={0} a="middle" t={t} /></g>
      ))}
    </Chart>
    <Chart title="Error Logs" h={35.5}>
      <rect x={103} y={7} width={41} height={9.5} fill={RED} />
      <svg width={372} height={16}><T x={149.5} y={15} t="System Errors" /></svg>
      <path d="M14 16.5H372M24.7 17V25M132.5 17V25M241 17V25M349 17V25" stroke="#5a5a5a" strokeWidth={1.5} />
      <T x={9.2} y={16.5} t="0" a="middle" />
      {[24.7, 78.4, 132.5, 186.4].map((x) => <circle key={x} cx={x} cy={16.5} r={3.5} fill={RED} />)}
      {["January", "March", "May", "July"].map((t, i) => <T key={t} x={25 + i * 108} y={35} t={t} a="middle" />)}
    </Chart>
    <Chart title="Resource Allocation" h={78}>
      <Swatch x={14} y={7} f="#5fb486" /><T x={61} y={14} t="Workstations" />
      <Swatch x={146} y={7} f="#d4705a" /><T x={193.6} y={14} t="Servers" />
      <Swatch x={247} y={7} f="#5fd3f9" /><T x={293.6} y={14} t="Switches" />
      <svg width={372} height={35.5}><Swatch x={130.5} y={29} f="#cf3a2f" /><T x={178} y={36} t="Firewalls" /></svg>
      {DONUT.map(([a, b, c]) => (
        <path key={a} d={`M${pt(17.5, a)}A17.5 17.5 0 ${b - a > 180 ? 1 : 0} 1 ${pt(17.5, b)}L${pt(8.5, b)}A8.5 8.5 0 ${b - a > 180 ? 1 : 0} 0 ${pt(8.5, a)}Z`} fill={c} stroke="#fff" strokeWidth={1.8} />
      ))}
    </Chart>
    <Chart title="Security Incidents" h={73}>
      <Swatch x={8.5} y={6.5} f="#3b3b45" s="#a9a9bd" /><T x={56} y={14} t="Antivirus Incidents" />
      <Swatch x={172} y={6.5} f="#57303a" s="#ee5f7d" /><T x={219.8} y={14} t="Ransomware Incidents" />
      <T x={180} y={25} t="Sophos" a="middle" s={11.5} /><T x={133} y={33} t="Sentinel One" a="middle" s={11.5} /><T x={220} y={33} t="Symantec" a="middle" s={11.5} />
      <T x={150.7} y={61} t="AVG" a="middle" s={11.5} /><T x={227.5} y={61} t="Bitdefender" a="middle" s={11.5} />
      <T x={154.6} y={73} t="Tanium" a="middle" s={11.5} /><T x={218} y={73} t="Crowdstrike" a="middle" s={11.5} />
      <path d="M172 43L184 46L188 53L183 59L175 62L175 54Z" fill="#7d3547" stroke="#ee5f7d" strokeWidth={1.5} />
      {[[176.5, 46.5], [180, 45.5], [184, 48], [186, 52], [183, 56], [178.5, 56], [181, 51]].map(([x, y]) => <circle key={`${x}`} cx={x} cy={y} r={3} fill="#b4b4c6" stroke="#e5e5f0" strokeWidth={1.2} />)}
    </Chart>
    <Chart title="User Activity" h={78}>
      <Swatch x={17} y={7} f="#3b3b45" /><T x={63.5} y={14} t="Backup" />
      <Swatch x={117} y={7} f="#3b3b45" /><T x={163.5} y={14} t="Security" />
      <T x={343.5} y={14} t="Workstations" a="end" />
      <svg width={372} height={35.5}>
        <Swatch x={26} y={29} f="#3b3b45" /><T x={73} y={36} t="Switches" />
        <Swatch x={135} y={29} f="#3b3b45" /><T x={182} y={36} t="Servers" />
        <T x={334} y={36} t="Firewalls" a="end" />
      </svg>
      {[[178, 46], [179.5, 50], [175, 54], [183, 54], [179, 57], [173, 59], [185, 59]].map(([x, y]) => <ellipse key={`${x}`} cx={x} cy={y} rx={2.6} ry={3.6} fill="#3b3b45" stroke="#fff" strokeWidth={1.8} />)}
    </Chart>
    <Chart title="Data Processing" h={35.5}>
      <rect x={137} y={8} width={41} height={9.5} fill={RED} />
      <svg width={372} height={17}><T x={182.7} y={14} t="Tickets" /></svg>
      <path d="M9.8 17.3H359.6M19.9 17V25M155.6 17V25M289.8 17V25" stroke="#5a5a5a" strokeWidth={1.5} />
      <T x={5} y={17} t="0" a="middle" />
      {[19.9, 87.3, 155.6, 223, 289.8, 358].map((x) => <circle key={x} cx={x} cy={17.3} r={3.5} fill={RED} />)}
      <T x={20} y={35} t="April" a="middle" /><T x={155.6} y={35} t="June" a="middle" /><T x={289.8} y={35} t="August" a="middle" />
    </Chart>
    <Chart title="Integration Status" h={35.5}>
      <rect x={71.6} y={8} width={40} height={9} fill={RED} />
      <svg width={372} height={17}><T x={117.4} y={14} t="Third-Party Integration Status" /></svg>
      <path d="M12 17.3H361.7M77 17V25M163 17V25M248.5 17V25M334.5 17V25" stroke="#505050" strokeWidth={1.5} />
      <T x={5.7} y={17} t="0" a="middle" />
      <T x={36} y={35} t="January" a="middle" /><T x={119.7} y={35} t="April" a="middle" /><T x={206.6} y={35} t="July" a="middle" /><T x={292} y={35} t="October" a="middle" />
    </Chart>
  </DashBox>
);

/* ------------------------------------------------------------ side toolbars */

const SideBar = styled(Placed)`
  background: #212121;
  border-radius: 8px;
  box-shadow: 0 4px 10px rgba(0, 0, 0, 0.4);
  display: flex;
  flex-direction: column;
  align-items: center;
  gap: 8px;
`;
const SideTop = styled.div`
  width: 144px;
  height: 114px;
  border-bottom: 3px solid #383838;
  display: grid;
  place-items: center;
  padding-right: 32px;
`;
const SideItem = styled.div<{ $off?: boolean }>`
  width: 128px;
  height: 80px;
  border-radius: 18px;
  background: ${(p) => (p.$off ? "transparent" : "#324b4a")};
  display: flex;
  align-items: center;
  gap: 8px;
  padding-left: 8px;
  font-size: 19.2px;
  color: ${(p) => (p.$off ? "#959595" : "#a3b0af")};
`;
const MENU: [string, string, string][] = [
  ["BCDR", "restore", "#55bd9f"],
  ["CAIM", "cloud", "#935bb5"],
  ["CH", "fileSign", "#838b8b"],
  ["AIM", "laptops", ORANGE],
  ["DAIM", "folder", "#4aa88b"],
  ["PM", "shopping", "#55b06a"],
  ["RH", "chart", "#3f7db8"],
  ["SOAR", "security", "#b84a38"],
  ["SDAH", "shieldAccount", "#ceac3e"],
];

const ToolBar = styled(Placed)`
  background: linear-gradient(#212121 0, #222 560px, #2b2b2b 680px);
  border-radius: 8px;
  box-shadow: 0 4px 10px rgba(0, 0, 0, 0.4);
  display: flex;
  flex-direction: column;
  align-items: center;
  gap: 8px;
`;
const ToolTop = styled.div`
  width: 80px;
  height: 114px;
  margin-bottom: 8px;
  border-bottom: 3px solid #383838;
  display: grid;
  place-items: center;
  padding-bottom: 16px;
`;
const ToolItem = styled.div<{ $on: boolean }>`
  width: 80px;
  height: 80px;
  border-radius: 50%;
  background: ${(p) => (p.$on ? "#353535" : "transparent")};
  display: grid;
  place-items: center;
  color: #e6e6e6;
`;

const ZoomBar = styled(Placed)`
  display: flex;
`;
const ZoomButton = styled.div<{ $dim?: boolean }>`
  width: 84px;
  height: 84px;
  border: 3px solid #929292;
  background: #272727;
  color: ${(p) => (p.$dim ? "#707070" : "#ececec")};
  display: grid;
  place-items: center;
`;

const MapBox = styled(Placed)`
  background-color: #a7a7a7;
  background-image: radial-gradient(circle, #c6c6c6 0, #c6c6c6 0.9px, transparent 1.5px);
  background-size: 20px 20px;
  background-position: -7.4px -9px;
`;
const VIEW_RECTS: [number, number, number, number, string, string][] = [
  [423, 127, 71, 44.5, "#d6833b", "#f2cfae"],
  [495, 127, 13, 23, "#d6833b", "#f2cfae"],
  [511, 132, 7, 3, "#d6833b", "#f2cfae"],
  [513, 137, 7, 3, "#d6833b", "#f2cfae"],
  [511, 142, 7, 2.5, "#d6833b", "#f2cfae"],
  [422, 172, 61, 33.6, "#d6833b", "#f2cfae"],
  [484, 173, 61, 33.6, "#d6833b", "#f2cfae"],
  [520, 125, 61, 34, "#935bb0", "#cbb5d6"],
  [546, 161, 17.2, 15, "#935bb0", "#cbb5d6"],
];
const MINI: [number, number, number, number, string][] = [
  [99, 166, 32, 32, "#adcfc5"], [19, 201, 61, 34, "#adcfc5"], [84, 201, 61, 70, "#adcfc5"], [150, 201, 61, 34, "#adcfc5"],
  [19, 237, 61, 34, "#adcfc5"], [75, 273, 61, 34, "#d6aaa5"], [99, 316, 13, 9, "#add9cd"], [312, 260, 14.6, 10, "#e3d6a9"],
  [289, 273, 61, 34, "#e3d6a9"], [312, 316, 14.6, 9, "#c3c7c7"], [459, 316, 14.6, 9, "#aed3b7"],
];

const Footer = styled.footer`
  flex: none;
  height: 73px;
  border-top: 2px solid #3d3d3d;
  background: #212121;
  display: grid;
  grid-template-columns: 1fr auto 1fr;
  align-items: center;
  padding: 0 116px;
`;
const FootLeft = styled.div`
  display: flex;
  gap: 64px;
`;
const FootLang = styled.div`
  display: flex;
  align-items: center;
  gap: 10px;
  margin-left: 210px;
  margin-right: 42px;
  font-size: 28px;
  letter-spacing: 2.5px;
  color: #8e8e8e;
`;
const FootRight = styled.div`
  display: flex;
  justify-content: flex-end;
`;

const Logo = () => (
  <LogoSvg width={62} height={69.3} viewBox="78 58 186 208">
    <g fill="none" stroke="#75fbde" strokeWidth={15} strokeMiterlimit={10}>
      <path d="M93 205V112L162 73V102L122 128V223" />
      <path d="M151 240V148L190 184V85" />
      <path d="M219 101V197L177 222V251L249 213V121" />
    </g>
    <g fill="#75fbde">
      {[[93, 205], [122, 223], [151, 240], [190, 85], [219, 101], [249, 121]].map(([x, y]) => <circle key={x} cx={x} cy={y} r={12} />)}
    </g>
  </LogoSvg>
);

export default function App() {
  return (
    <Desktop>
      <Global />
      <Frame>
        <Header>
          <Brand>NEURAFORGE.AI</Brand>
          <Logo />
          <HiveIcon><Ico n="sitemap" s={48} /></HiveIcon>
          <Mode>HIVE MODE</Mode>
          <SearchBox><Ico n="magnify" s={48} />Search</SearchBox>
          <HeaderActions>
            {["chat", "bell", "help", "account"].map((n) => <RoundAction key={n}><Ico n={n} s={48} /></RoundAction>)}
          </HeaderActions>
        </Header>

        <Canvas>
          <EdgesSvg width={3456} height={1643} viewBox="0 128 3456 1643" fill="none">
            <g stroke={ORANGE} strokeWidth={2} strokeDasharray="5 5">
              <path d="M1994 131V1098M1343 128V1080M1854 128V142M956 132V142" />
              <path d="M1999 374.7H2028" />
              <g stroke="#9c6a3f">
                <path d="M2050 374.7H2098" />
                <path d="M2047 369C2048 335 2053 310 2054 275" />
                <path d="M2047 380C2048 414 2053 440 2054 474" />
              </g>
            </g>
            <circle cx={2035.6} cy={374.7} r={8} fill={ORANGE} />
            <g stroke={PURPLE} strokeWidth={2} strokeDasharray="5 5">
              <path d="M2259 443.3H2240Q2235 443.3 2235 449V720Q2235 725.5 2240 725.5H2259" />
              <path d="M3171 803V1002Q3171 1008.3 3165 1008.3H3150" />
            </g>
          </EdgesSvg>

          <Dashboard />
          <AutomationWindow />
          <RecordsWindow />
          <SourcesWindow />

          <HubBox $x={1720} $y={143} $w={268} $h={463}>
            <HubHead $bg="linear-gradient(135deg, #7b5b42, #6b523f)">
              <Ico n="laptops" />
              <HubName $w={77}>Devices</HubName>
              <HubButtons />
            </HubHead>
            <HubGrid $n={2} $s={122}>
              <HubTile icon="dashboard" name="Dashboard" c={ORANGE} />
              <HubTile icon="desktop" name="Devices" c={ORANGE} on more />
              <HubTile icon="sitemap" name="Schema" c={ORANGE} more />
              <HubTile icon="dbSync" name="Sync" c={ORANGE} on more />
              <HubTile icon="sparkle" name="AI" sub="Sources" c={ORANGE} />
            </HubGrid>
          </HubBox>

          <NodeBox $x={2057} $y={247.5} $w={155} $h={56} $c={ORANGE}><Ico n="cloudSync" s={20} c={ORANGE} />Sources</NodeBox>
          <NodeBox $x={2098} $y={346.5} $w={155} $h={56} $c="#8c8c8c"><Ico n="package" s={20} c={ORANGE} />Containers</NodeBox>
          <NodeBox $x={2057} $y={445.5} $w={155} $h={56} $c={ORANGE}><Ico n="table" s={20} c={ORANGE} />Records</NodeBox>

          <HubBox $x={2807} $y={862} $w={338.5} $h={293}>
            <HubHead $bg="linear-gradient(135deg, #5c4863, #55445d)">
              <Ico n="cloud" />
              <HubName $w={147.5}>AI + Cloud Hub</HubName>
              <HubButtons />
            </HubHead>
            <HubGrid $n={3} $s={102.4}>
              <HubTile icon="dashboard" name="Dashboard" c={PURPLE} on />
              <HubTile icon="chip" name="AI Hub" c={PURPLE} more />
              <HubTile icon="fn" name="Function Hub" sub="Function Sources" c={PURPLE} />
              <HubTile icon="sitemap" name="Workflow Hub" sub="Workflow Sources" c={PURPLE} />
            </HubGrid>
          </HubBox>

          <SideBar $x={40} $y={168} $w={144} $h={914.5}>
            <SideTop><Ico n="right" s={48} /></SideTop>
            {MENU.map(([t, i, c]) => (
              <SideItem key={t} $off={t === "RH"}><Ico n={i} s={40} c={c} />{t}</SideItem>
            ))}
          </SideBar>

          <ToolBar $x={3312} $y={168} $w={112} $h={754}>
            <ToolTop><Ico n="left" s={48} /></ToolTop>
            {["apps", "map", "tune", "wand", "gps", "nuke", "grid4"].map((n, i) => (
              <ToolItem key={n} $on={i < 3}><Ico n={n} s={48} /></ToolItem>
            ))}
          </ToolBar>

          <MapBox $x={2836} $y={1297} $w={600} $h={450}>
            <Svg width={600} height={450}>
              {MINI.map(([x, y, w, h, c], i) => <rect key={i} x={x} y={y} width={w} height={h} fill={c} />)}
              {VIEW_RECTS.map(([x, y, w, h, , p], i) => <rect key={i} x={x} y={y} width={w} height={h} fill={p} />)}
              <rect x={413} y={126} width={165} height={78.5} fill="#3b3b3b" stroke="#7c7c7c" />
              <svg x={413} y={126} width={165} height={78.5} viewBox="413 126 165 78.5">
                {VIEW_RECTS.map(([x, y, w, h, c], i) => <rect key={i} x={x} y={y} width={w} height={h} fill={c} />)}
              </svg>
            </Svg>
          </MapBox>

          <ZoomBar $x={56} $y={1638} $w={336} $h={84}>
            <ZoomButton><Ico n="arrowUp" s={36} /></ZoomButton>
            <ZoomButton><Ico n="lockOpen" s={40} /></ZoomButton>
            <ZoomButton $dim><Ico n="dash" s={39} /></ZoomButton>
            <ZoomButton><Ico n="plus" s={39} /></ZoomButton>
          </ZoomBar>
        </Canvas>

        <Footer>
          <FootLeft><Ico n="up" s={48} /><Ico n="bulb" s={48} /></FootLeft>
          <FootLang>ENGLISH<Ico n="web" s={48} /></FootLang>
          <FootRight><Ico n="laptops" s={48} c="#4ba36c" /></FootRight>
        </Footer>
      </Frame>
    </Desktop>
  );
}
